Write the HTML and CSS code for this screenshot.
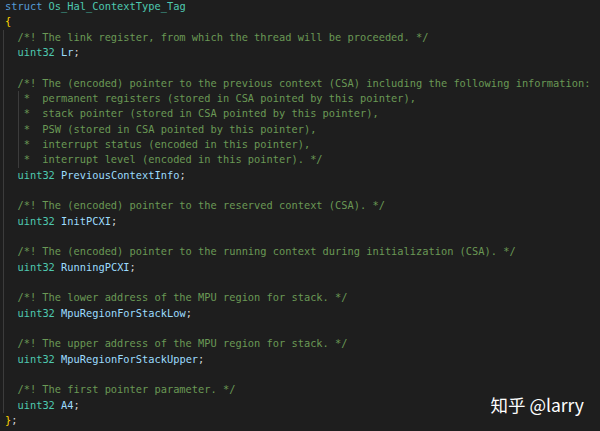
FILE: index.html
```html
<!DOCTYPE html>
<html>
<head>
<meta charset="utf-8">
<link rel="stylesheet" href="styles.css">
</head>
<body>
<div class="editor">
<div class="ln"><span class="kw">struct</span> <span class="ty">Os_Hal_ContextType_Tag</span></div>
<div class="ln"><span class="br">{</span></div>
<div class="body">
<div class="ln"><span class="cm">  /*! The link register, from which the thread will be proceeded. */</span></div>
<div class="ln">  <span class="ty">uint32</span> <span class="fd">Lr</span>;</div>
<div class="ln"> </div>
<div class="ln"><span class="cm">  /*! The (encoded) pointer to the previous context (CSA) including the following information:</span></div>
<div class="cont">
<div class="ln"><span class="cm">   *  permanent registers (stored in CSA pointed by this pointer),</span></div>
<div class="ln"><span class="cm">   *  stack pointer (stored in CSA pointed by this pointer),</span></div>
<div class="ln"><span class="cm">   *  PSW (stored in CSA pointed by this pointer),</span></div>
<div class="ln"><span class="cm">   *  interrupt status (encoded in this pointer),</span></div>
<div class="ln"><span class="cm">   *  interrupt level (encoded in this pointer). */</span></div>
</div>
<div class="ln">  <span class="ty">uint32</span> <span class="fd">PreviousContextInfo</span>;</div>
<div class="ln"> </div>
<div class="ln"><span class="cm">  /*! The (encoded) pointer to the reserved context (CSA). */</span></div>
<div class="ln">  <span class="ty">uint32</span> <span class="fd">InitPCXI</span>;</div>
<div class="ln"> </div>
<div class="ln"><span class="cm">  /*! The (encoded) pointer to the running context during initialization (CSA). */</span></div>
<div class="ln">  <span class="ty">uint32</span> <span class="fd">RunningPCXI</span>;</div>
<div class="ln"> </div>
<div class="ln"><span class="cm">  /*! The lower address of the MPU region for stack. */</span></div>
<div class="ln">  <span class="ty">uint32</span> <span class="fd">MpuRegionForStackLow</span>;</div>
<div class="ln"> </div>
<div class="ln"><span class="cm">  /*! The upper address of the MPU region for stack. */</span></div>
<div class="ln">  <span class="ty">uint32</span> <span class="fd">MpuRegionForStackUpper</span>;</div>
<div class="ln"> </div>
<div class="ln"><span class="cm">  /*! The first pointer parameter. */</span></div>
<div class="ln">  <span class="ty">uint32</span> <span class="fd">A4</span>;</div>
</div>
<div class="ln"><span class="br">}</span>;</div>
</div>
<div class="watermark">知乎 @larry</div>
</body>
</html>
```
FILE: styles.css
```css
html, body {
  margin: 0;
  padding: 0;
  background: #1e1e1e;
  width: 600px;
  height: 431px;
  overflow: hidden;
}
.editor {
  padding-left: 5px;
  margin-top: -1px;
  font-family: "DejaVu Sans Mono", "Liberation Mono", monospace;
  font-size: 10.35px;
  line-height: 15.33px;
  color: #d4d4d4;
}
.ln {
  white-space: pre;
  height: 15.33px;
}
.body {
  margin-left: -2px;
  padding-left: 1px;
  border-left: 1px solid #3c3c3c;
}
.cont {
  background: linear-gradient(#3c3c3c, #3c3c3c) no-repeat 13px 0 / 1px 100%;
}
.kw { color: #569cd6; }
.ty { color: #4ec9b0; }
.fd { color: #9cdcfe; }
.cm { color: #6a9955; }
.br { color: #ffd700; }
.watermark {
  position: absolute;
  right: 16px;
  bottom: 18px;
  font-family: "Noto Sans CJK SC", "Noto Sans", sans-serif;
  font-size: 17.5px;
  color: #ffffff;
  line-height: 1;
}
```
